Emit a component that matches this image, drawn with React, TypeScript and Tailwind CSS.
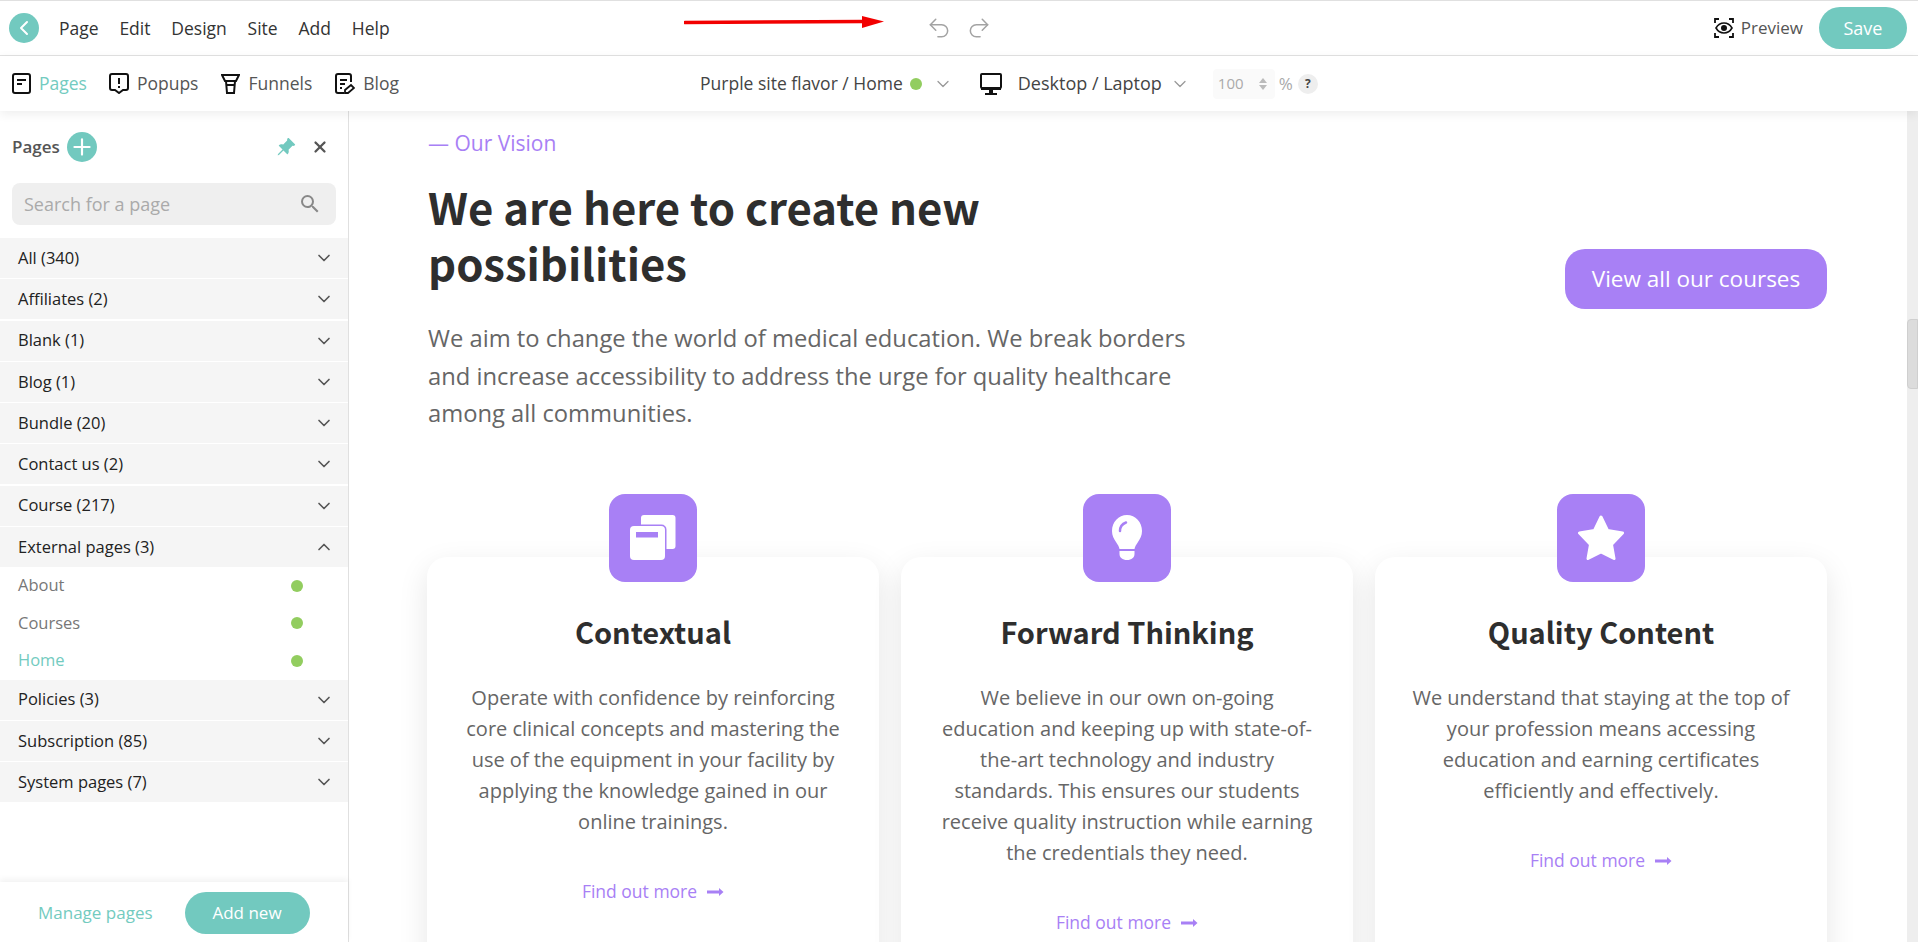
import { ChevronDown, ChevronLeft, ChevronUp, Plus, Redo2, Undo2, X } from "lucide-react";
import { MdSearch } from "react-icons/md";
import { BsPinAngleFill } from "react-icons/bs";

const menu = ["Page", "Edit", "Design", "Site", "Add", "Help"];

const before = ["All (340)", "Affiliates (2)", "Blank (1)", "Blog (1)", "Bundle (20)", "Contact us (2)", "Course (217)"];
const after = ["Policies (3)", "Subscription (85)", "System pages (7)"];

const cards = [
  {
    title: "Contextual",
    icon: <CopyIcon />,
    text: "Operate with confidence by reinforcing core clinical concepts and mastering the use of the equipment in your facility by applying the knowledge gained in our online trainings.",
  },
  {
    title: "Forward Thinking",
    icon: <BulbIcon />,
    text: "We believe in our own on-going education and keeping up with state-of-the-art technology and industry standards. This ensures our students receive quality instruction while earning the credentials they need.",
  },
  {
    title: "Quality Content",
    icon: <StarIcon />,
    text: "We understand that staying at the top of your profession means accessing education and earning certificates efficiently and effectively.",
  },
];

function CopyIcon() {
  return (
    <svg width="46" height="46" viewBox="0 0 46 46">
      <rect x="11" y="0" width="34.500" height="34" rx="3" fill="#fff" />
      <rect x="-1.500" y="9.500" width="38" height="37" rx="5" fill="#a880f5" />
      <rect x="0" y="11" width="35" height="34" rx="4" fill="#fff" />
      <rect x="6" y="17" width="22" height="5.500" fill="#a880f5" />
    </svg>
  );
}

function BulbIcon() {
  return (
    <svg width="30" height="45" viewBox="0 0 30 45">
      <path d="M15 0C6.500 0 0 7 0 16c0 4.500 1.800 7.500 4 11 1.800 2.800 3 4.500 3.500 7h15c.5-2.500 1.700-4.200 3.500-7 2.200-3.500 4-6.500 4-11C30 7 23.500 0 15 0z" fill="#fff" />
      <path d="M7.500 36h15v3c0 3.500-3 6-7.500 6s-7.500-2.500-7.500-6z" fill="#fff" />
      <path d="M8 16c0-4 2-7 6-8.500" fill="none" stroke="#a880f5" strokeWidth="2.500" strokeLinecap="round" />
    </svg>
  );
}

function StarIcon() {
  return (
    <svg width="46" height="46" viewBox="0 0 46 46">
      <path d="M23 2l6.500 13.500 15 2.500-11 11.500 2.500 14-13-6.500-13 6.500 2.500-14L1.500 18l15-2.500z" fill="#fff" stroke="#fff" strokeWidth="3" strokeLinejoin="round" />
    </svg>
  );
}

function PagesIcon() {
  return (
    <svg width="19" height="21" viewBox="0 0 19 21" fill="none" stroke="#111" strokeWidth="2">
      <rect x="1" y="1" width="17" height="19" rx="2" />
      <path d="M5 7h9M5 11h5" />
    </svg>
  );
}

function PopupIcon() {
  return (
    <svg width="20" height="21" viewBox="0 0 20 21" fill="none" stroke="#111" strokeWidth="2">
      <path d="M3 1h14a2 2 0 0 1 2 2v12a2 2 0 0 1-2 2h-3l-4 3-4-3H3a2 2 0 0 1-2-2V3a2 2 0 0 1 2-2z" />
      <path d="M10 5v6M10 13v2" />
    </svg>
  );
}

function FunnelIcon() {
  return (
    <svg width="19" height="20" viewBox="0 0 19 20" fill="none" stroke="#111" strokeWidth="2">
      <path d="M1 1h17l-3 6H4zM5 7l1 12h7l1-12M4.500 11h10" />
    </svg>
  );
}

function BlogIcon() {
  return (
    <svg width="20" height="21" viewBox="0 0 20 21" fill="none" stroke="#111" strokeWidth="2">
      <path d="M9 20H3a2 2 0 0 1-2-2V3a2 2 0 0 1 2-2h11a2 2 0 0 1 2 2v6" />
      <path d="M5 7h7M5 11h5M5 15h2" />
      <path d="M10 20v-3l6-5 3 3-6 5z" strokeWidth="1.800" />
    </svg>
  );
}

function MonitorIcon() {
  return (
    <svg width="22" height="22" viewBox="0 0 22 22">
      <rect x="1" y="1" width="20" height="14" rx="1" fill="none" stroke="#111" strokeWidth="2" />
      <path d="M1 15h20v2H1zM9 17h4v3H9zM5 20h12v2H5z" fill="#111" />
    </svg>
  );
}

function EyeIcon() {
  return (
    <svg width="20" height="20" viewBox="0 0 20 20" fill="none" stroke="#111" strokeWidth="1.800">
      <path d="M1 5V1h4M15 1h4v4M1 15v4h4M15 19h4v-4" />
      <path d="M2 10c2-3.500 5-5 8-5s6 1.500 8 5c-2 3.500-5 5-8 5s-6-1.500-8-5z" strokeWidth="1.600" />
      <circle cx="10" cy="10" r="3" fill="#111" stroke="none" />
    </svg>
  );
}

function Dot() {
  return <span className="block w-3 h-3 rounded-full bg-[#92cd5f]" />;
}

function Section({ label, open }: { label: string; open?: boolean }) {
  return (
    <div className="h-10 flex items-center justify-between bg-[#f5f5f5] pl-[18px] pr-[14px] text-[16.500px] text-[#222]">
      <span>{label}</span>
      {open ? <ChevronUp size={20} className="text-[#555]" /> : <ChevronDown size={20} className="text-[#555]" />}
    </div>
  );
}

function SubItem({ label, active }: { label: string; active?: boolean }) {
  return (
    <div className="h-[37.500px] flex items-center justify-between pl-[18px] pr-[45px] text-[16.500px]">
      <span className={active ? "text-[#73cbc0]" : "text-[#777]"}>{label}</span>
      <Dot />
    </div>
  );
}

export default function App() {
  return (
    <div className="w-[1918px] h-[942px] overflow-hidden flex flex-col bg-white font-['Open_Sans',sans-serif]">
      {/* Top bar */}
      <div className="relative shrink-0 h-14 border-t border-t-[#e0e0e0] border-b border-b-[#e2e2e2] flex items-center pl-[9px] pr-[11px]">
        <div className="w-[30px] h-[30px] rounded-full bg-[#72c9bf] flex items-center justify-center">
          <ChevronLeft size={24} className="text-white" strokeWidth={2} />
        </div>
        <div className="ml-5 flex items-center gap-[20.800px] text-[17.500px] text-[#333]">
          {menu.map((m) => (
            <span key={m}>{m}</span>
          ))}
        </div>
        <div className="ml-[536px] flex items-center gap-[14px] text-[#a3a3a3]">
          <Undo2 size={26} strokeWidth={1.400} />
          <Redo2 size={26} strokeWidth={1.400} />
        </div>
        <div className="ml-auto flex items-center">
          <EyeIcon />
          <span className="ml-[7px] text-[17px] text-[#555]">Preview</span>
          <div className="ml-4 w-[88px] h-[42px] rounded-full bg-[#72c9bf] flex items-center justify-center text-[18px] text-white">
            Save
          </div>
        </div>
        {/* red annotation arrow */}
        <svg className="absolute left-[684px] top-[13px]" width="204" height="16" viewBox="0 0 204 16">
          <path d="M1 8.500L180 7.500" stroke="#f20000" strokeWidth="3.500" strokeLinecap="round" />
          <path d="M178 2l22 5.500L178 14z" fill="#f20000" />
        </svg>
      </div>

      {/* Second bar */}
      <div className="relative z-10 shrink-0 h-[55px] bg-white shadow-[0_3px_10px_rgba(0,0,0,0.07)] flex items-center pl-3 text-[17.500px] text-[#555]">
        <div className="flex items-center gap-2">
          <PagesIcon />
          <span className="text-[#73cbc0]">Pages</span>
        </div>
        <div className="ml-[22px] flex items-center gap-2">
          <PopupIcon />
          <span>Popups</span>
        </div>
        <div className="ml-[23px] flex items-center gap-2">
          <FunnelIcon />
          <span>Funnels</span>
        </div>
        <div className="ml-[23px] flex items-center gap-2">
          <BlogIcon />
          <span>Blog</span>
        </div>
        <div className="ml-[301px] flex items-center text-[17.500px] text-[#444]">
          <span>Purple site flavor / Home</span>
          <span className="ml-[7px]">
            <Dot />
          </span>
          <ChevronDown size={20} className="ml-[11px] text-[#999]" strokeWidth={1.500} />
          <span className="ml-[27px]">
            <MonitorIcon />
          </span>
          <span className="ml-4 text-[18px]">Desktop / Laptop</span>
          <ChevronDown size={20} className="ml-2 text-[#999]" strokeWidth={1.500} />
          <div className="ml-[23px] w-[62px] h-[30px] rounded bg-[#fafafa] flex items-center justify-between pl-[5px] pr-2 text-[15px] text-[#aaa]">
            <span>100</span>
            <span className="flex flex-col gap-[2px]">
              <span className="block w-0 h-0 border-x-[4px] border-x-transparent border-b-[5px] border-b-[#bbb]" />
              <span className="block w-0 h-0 border-x-[4px] border-x-transparent border-t-[5px] border-t-[#bbb]" />
            </span>
          </div>
          <span className="ml-[4px] text-[17px] text-[#aaa]">%</span>
          <span className="ml-[5px] w-5 h-5 rounded-full bg-[#eee] flex items-center justify-center text-[12px] font-bold text-[#444]">
            ?
          </span>
        </div>
      </div>

      <div className="flex-1 min-h-0 flex">
        {/* Sidebar */}
        <aside className="shrink-0 w-[349px] border-r border-[#e0e0e0] flex flex-col">
          <div className="h-[72px] shrink-0 flex items-center pl-3 pr-[19px]">
            <span className="text-[17px] font-semibold text-[#555]">Pages</span>
            <span className="ml-[7px] w-[30px] h-[30px] rounded-full bg-[#72c9bf] flex items-center justify-center">
              <Plus size={26} className="text-white" strokeWidth={2} />
            </span>
            <BsPinAngleFill size={20} className="ml-auto text-[#72c9bf]" />
            <X size={18} className="ml-[15px] text-[#555]" strokeWidth={3} />
          </div>
          <div className="mx-3 h-[42px] shrink-0 rounded-lg bg-[#efefef] flex items-center justify-between pl-3 pr-[14px]">
            <span className="text-[18px] text-[#aaa]">Search for a page</span>
            <MdSearch size={24} className="text-[#888]" />
          </div>
          <div className="mt-[13px] flex flex-col">
            <div className="flex flex-col gap-[1.300px]">
              {before.map((s) => (
                <Section key={s} label={s} />
              ))}
              <Section label="External pages (3)" open />
            </div>
            <SubItem label="About" />
            <SubItem label="Courses" />
            <SubItem label="Home" active />
            <div className="flex flex-col gap-[1.300px]">
              {after.map((s) => (
                <Section key={s} label={s} />
              ))}
            </div>
          </div>
          <div className="mt-auto h-[60px] shrink-0 shadow-[0_-3px_6px_rgba(0,0,0,0.05)] flex items-center pl-[38px] pt-[2px]">
            <span className="text-[17px] text-[#73cbc0]">Manage pages</span>
            <div className="ml-[32px] w-[125px] h-[42px] rounded-full bg-[#72c9bf] flex items-center justify-center text-[17px] text-white">
              Add new
            </div>
          </div>
        </aside>

        {/* Page preview */}
        <main className="flex-1 min-w-0 overflow-hidden pl-[78px] pr-[80px] pt-[18px]">
          <div className="flex items-center justify-between">
            <div className="pl-px">
              <p className="text-[21px] leading-7 text-[#a880f5]">— Our Vision</p>
              <h1 className="mt-[21px] w-[700px] font-['Noto_Sans_CJK_SC',sans-serif] text-[43.700px] leading-[56px] font-bold text-[#2e2e2e]">
                We are here to create new possibilities
              </h1>
              <p className="mt-[30px] w-[770px] text-[23.750px] leading-[37.500px] text-[#666]">
                We aim to change the world of medical education. We break borders and increase accessibility to address the urge for quality healthcare among all communities.
              </p>
            </div>
            <div className="-mt-[4px] w-[262px] h-[60px] rounded-[20px] bg-[#a880f5] flex items-center justify-center text-[22.500px] text-white">
              View all our courses
            </div>
          </div>

          <div className="mt-[61px] grid grid-cols-3 gap-[22px]">
            {cards.map((c) => (
              <div key={c.title} className="flex flex-col items-center">
                <div className="relative z-10 w-[88px] h-[88px] rounded-2xl bg-[#a880f5] flex items-center justify-center">
                  {c.icon}
                </div>
                <div className="-mt-[25px] w-full h-[600px] rounded-[20px] bg-white shadow-[0_10px_30px_rgba(0,0,0,0.1)] pt-[54px] px-[37px] text-center">
                  <h3 className="font-['Noto_Sans_CJK_SC',sans-serif] text-[29px] leading-10 font-bold text-[#2e2e2e]">
                    {c.title}
                  </h3>
                  <p className="mt-[31px] text-[20px] leading-[31px] text-[#666]">{c.text}</p>
                  <div className="mt-[41px] h-7 flex items-center justify-center gap-[10px] text-[17.500px] text-[#a880f5]">
                    <span>Find out more</span>
                    <svg width="17" height="10" viewBox="0 0 17 10">
                      <path d="M0 3.500h12V1l4.500 4-4.500 4V6.500H0z" fill="#a880f5" />
                    </svg>
                  </div>
                </div>
              </div>
            ))}
          </div>
        </main>

        {/* Scrollbar */}
        <div className="shrink-0 w-[11px] bg-[#eeeeee] pt-[208px]">
          <div className="h-[70px] rounded-l-[4px] bg-[#dcdcdc] border border-[#cfcfcf]" />
        </div>
      </div>
    </div>
  );
}
